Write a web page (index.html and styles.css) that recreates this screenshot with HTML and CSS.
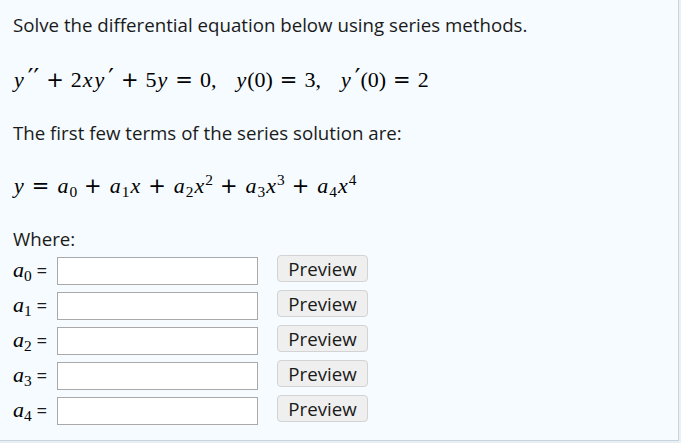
FILE: index.html
```html
<!DOCTYPE html>
<html lang="en">
<head>
    <meta charset="UTF-8">
    <title>Series Solution</title>
    <link rel="stylesheet" href="styles.css">
</head>
<body>
    <div class="panel">
        <p class="prompt">Solve the differential equation below using series methods.</p>

        <p class="math eq first"><i>y</i><span class="pr">′′</span><span class="bin">+</span>2<i>x</i><i>y</i><span class="pr">′</span><span class="bin">+</span>5<i>y</i><span class="rel">=</span>0,<span class="sp"></span><i>y</i>(0)<span class="rel">=</span>3,<span class="sp"></span><i>y</i><span class="pr">′</span>(0)<span class="rel">=</span>2</p>

        <p class="prompt">The first few terms of the series solution are:</p>

        <p class="math eq second"><i>y</i><span class="rel">=</span><i>a</i><sub>0</sub><span class="bin">+</span><i>a</i><sub>1</sub><i>x</i><span class="bin">+</span><i>a</i><sub>2</sub><i>x</i><sup>2</sup><span class="bin">+</span><i>a</i><sub>3</sub><i>x</i><sup>3</sup><span class="bin">+</span><i>a</i><sub>4</sub><i>x</i><sup>4</sup></p>

        <p class="prompt where">Where:</p>

        <div class="answers">
            <div class="row">
                <label class="lbl"><span class="math"><i>a</i><sub>0</sub></span> =</label>
                <input type="text" class="box">
                <button class="preview">Preview</button>
            </div>
            <div class="row">
                <label class="lbl"><span class="math"><i>a</i><sub>1</sub></span> =</label>
                <input type="text" class="box">
                <button class="preview">Preview</button>
            </div>
            <div class="row">
                <label class="lbl"><span class="math"><i>a</i><sub>2</sub></span> =</label>
                <input type="text" class="box">
                <button class="preview">Preview</button>
            </div>
            <div class="row">
                <label class="lbl"><span class="math"><i>a</i><sub>3</sub></span> =</label>
                <input type="text" class="box">
                <button class="preview">Preview</button>
            </div>
            <div class="row">
                <label class="lbl"><span class="math"><i>a</i><sub>4</sub></span> =</label>
                <input type="text" class="box">
                <button class="preview">Preview</button>
            </div>
        </div>
    </div>
</body>
</html>
```

FILE: styles.css
```css
/* page */
body {
    margin: 0;
    background-color: #e9f0f4;
    font-family: 'Open Sans', 'Liberation Sans', sans-serif;
    color: #1a1a1a;
}

.panel {
    width: 679px;
    height: 441px;
    box-sizing: border-box;
    background-color: #f5fbfe;
    border-right: 1px solid #c8d5de;
    border-bottom: 1px solid #c8d5de;
    padding: 12px 13px 0;
}

.prompt {
    font-size: 18.7px;
    line-height: 26px;
    margin: 0;
}

/* math lines */
.math {
    font-family: 'Liberation Serif', 'DejaVu Serif', serif;
    color: #000;
}

.eq {
    font-size: 22px;
    line-height: 28px;
    white-space: nowrap;
}

.eq.first {
    margin: 28px 0 26px;
}

.eq.second {
    margin: 26px 0 26px;
}

.math i {
    font-style: italic;
    padding: 0 1px;
}

.math .bin,
.math .rel {
    font-family: 'DejaVu Sans', sans-serif;
    font-size: 21px;
    line-height: 0;
}

.math .bin {
    margin: 0 7px;
}

.math .rel {
    margin: 0 7px;
}

.math .pr {
    font-family: 'DejaVu Sans', sans-serif;
    font-size: 25px;
    line-height: 0;
    vertical-align: 1px;
    margin-left: 3px;
    letter-spacing: 0;
}

.math .sp {
    display: inline-block;
    width: 19px;
}

.math sub {
    font-size: 0.7em;
    line-height: 0;
    vertical-align: -4px;
}

.math sup {
    font-size: 0.7em;
    line-height: 0;
    vertical-align: 8px;
}

.where {
    margin-bottom: 3px;
}

/* answer rows */
.answers {
    display: flex;
    flex-direction: column;
    gap: 6px;
}

.row {
    display: flex;
    align-items: flex-start;
    height: 29px;
}

.lbl {
    width: 44px;
    margin-top: 1px;
    font-size: 18.7px;
    line-height: 28px;
    white-space: nowrap;
}

.lbl .math {
    font-size: 22px;
}

.lbl .math i {
    padding: 0;
}

.box {
    width: 201px;
    height: 28px;
    box-sizing: border-box;
    border: 1px solid #a9a9a9;
    background: #fff;
    margin: 2px 0 0;
    padding: 2px 4px;
}

.preview {
    margin-left: 19px;
    width: 91px;
    height: 27px;
    font-family: 'Open Sans', 'Liberation Sans', sans-serif;
    font-size: 18.7px;
    line-height: 25px;
    color: #1a1a1a;
    background-color: #efefef;
    border: 1px solid #d3d3d3;
    border-radius: 4px;
    padding: 0;
}
```
